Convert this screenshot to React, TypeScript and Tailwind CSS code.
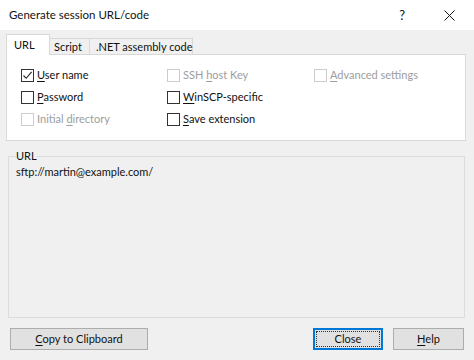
import React from "react";

type Opt = {
  label: string;
  key: number; // index of the underlined letter
  checked?: boolean;
  disabled?: boolean;
};

const options: Opt[] = [
  { label: "User name", key: 0, checked: true },
  { label: "SSH host Key", key: 4, disabled: true },
  { label: "Advanced settings", key: 0, disabled: true },
  { label: "Password", key: 0 },
  { label: "WinSCP-specific", key: 0 },
  { label: "", key: -1 },
  { label: "Initial directory", key: 8, disabled: true },
  { label: "Save extension", key: 0 },
];

const Hotkey = ({ text, at }: { text: string; at: number }) => (
  <>
    {text.slice(0, at)}
    <span className="underline underline-offset-2">{text[at]}</span>
    {text.slice(at + 1)}
  </>
);

const CheckBox = ({ opt }: { opt: Opt }) => {
  if (!opt.label) return <div />;
  return (
    <div className="flex h-[22px] items-center whitespace-nowrap">
      <span
        className={
          opt.disabled
            ? "flex h-[13px] w-[13px] shrink-0 items-center justify-center border border-[#cccccc] bg-white"
            : "flex h-[13px] w-[13px] shrink-0 items-center justify-center border border-[#333333] bg-white"
        }
      >
        {opt.checked && (
          <svg width="11" height="11" viewBox="0 0 11 11">
            <path d="M1.5 5.5 L4.2 8.3 L9.6 1.8" fill="none" stroke="#222" strokeWidth="1.1" />
          </svg>
        )}
      </span>
      <span className={opt.disabled ? "ml-[3px] text-[#9d9d9d]" : "ml-[3px] text-[#111]"}>
        <Hotkey text={opt.label} at={opt.key} />
      </span>
    </div>
  );
};

export default function App() {
  return (
    <div
      className="h-[360px] w-[474px] overflow-hidden bg-[#f0f0f0] text-[11px] leading-[16px] text-[#111]"
      style={{ fontFamily: 'Lato, "Noto Sans", sans-serif' }}
    >
      {/* title bar */}
      <div className="flex h-[30px] items-center bg-white pl-[9px] text-[11.5px]">
        <span className="flex-1">Generate session URL/code</span>
        <span className="mr-[39px] text-[13px]">?</span>
        <svg className="mr-[19px]" width="11" height="11" viewBox="0 0 11 11">
          <path d="M0.5 0.5 L10.5 10.5 M10.5 0.5 L0.5 10.5" stroke="#111" strokeWidth="1" />
        </svg>
      </div>

      {/* tabs */}
      <div className="ml-[6px] mt-[4px] flex h-[20px] items-end whitespace-nowrap">
        <div className="relative z-10 -mb-px flex h-[21px] w-[44px] items-start border border-b-0 border-[#d9d9d9] bg-white pl-[7px] pt-[2px]">
          URL
        </div>
        <div className="flex h-[16px] w-[40px] items-center border border-b-0 border-l-0 border-[#d9d9d9] bg-[#f0f0f0] pl-[4px]">
          Script
        </div>
        <div className="flex h-[16px] w-[103px] items-center border border-b-0 border-l-0 border-[#d9d9d9] bg-[#f0f0f0] pl-[6px]">
          .NET assembly code
        </div>
      </div>
      <div className="ml-[6px] grid h-[87px] w-[460px] grid-cols-[146px_147px_1fr] content-start border border-[#d9d9d9] bg-white pl-[14px] pt-[9px]">
        {options.map((o, i) => (
          <CheckBox key={i} opt={o} />
        ))}
      </div>

      {/* URL group */}
      <fieldset className="ml-[8px] mt-[7px] h-[170px] w-[457px] border border-[#dcdcdc] px-[7px]">
        <legend className="leading-[16px]">URL</legend>
        <div>sftp://martin@example.com/</div>
      </fieldset>

      {/* buttons */}
      <div className="mt-[10px] flex">
        <button className="ml-[10px] h-[22px] w-[138px] border border-[#adadad] bg-[#e1e1e1]">
          <Hotkey text="Copy to Clipboard" at={0} />
        </button>
        <button className="ml-[165px] flex h-[22px] w-[70px] items-center justify-center border border-[#0078d7] bg-[#e1e1e1] p-[2px] outline outline-1 outline-[#0078d7] -outline-offset-2">
          <span className="flex h-full w-full items-center justify-center border border-dotted border-[#333]">
            Close
          </span>
        </button>
        <button className="ml-[10px] h-[22px] w-[71px] border border-[#adadad] bg-[#e1e1e1]">
          <Hotkey text="Help" at={0} />
        </button>
      </div>
    </div>
  );
}
